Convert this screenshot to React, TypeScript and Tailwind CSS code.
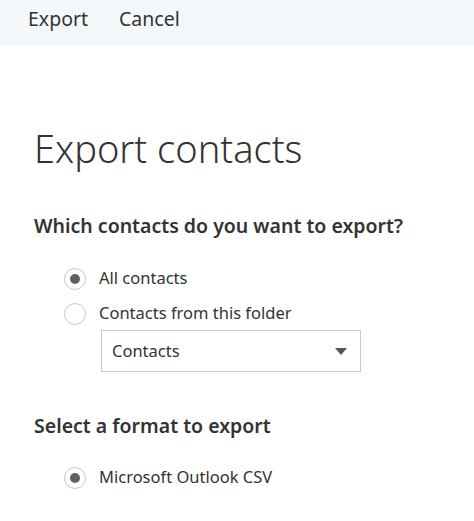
import React from 'react';

const Radio = ({ checked, label }: { checked?: boolean; label: string }) => (
  <label className="flex items-center gap-[13px] h-[35px]">
    <span className="w-[22px] h-[22px] rounded-full border border-[#c8c8c8] bg-white flex items-center justify-center shrink-0">
      {checked && <span className="w-[10px] h-[10px] rounded-full bg-[#5f5f5f]" />}
    </span>
    <span className="text-[16.5px] text-[#333]">{label}</span>
  </label>
);

const App = () => {
  return (
    <div className="w-[474px] h-[521px] bg-white overflow-hidden" style={{ fontFamily: '"Noto Sans", "Open Sans", sans-serif' }}>
      {/* Top command bar */}
      <div className="h-[45px] bg-[#f4f8fb] flex items-start gap-[31px] pl-[28px] pt-[4px] text-[19.5px] text-[#333]">
        <button>Export</button>
        <button>Cancel</button>
      </div>

      <div className="pl-[34px]">
        <h1 className="mt-[79px] text-[38px] font-light text-[#333] leading-[48px]">Export contacts</h1>

        <h2 className="mt-[41px] text-[19.5px] font-semibold text-[#333] leading-[26px]">Which contacts do you want to export?</h2>

        <div className="mt-[22px] pl-[30px]">
          <Radio checked label="All contacts" />
          <Radio label="Contacts from this folder" />
          <div className="ml-[37px] -mt-[1px] w-[260px] h-[42px] border border-[#c8c8c8] flex items-center justify-between pl-[10px] pr-[13px]">
            <span className="text-[16.5px] text-[#333]">Contacts</span>
            <svg width="12" height="7" viewBox="0 0 12 7"><path d="M0 0 L12 0 L6 7 Z" fill="#555" /></svg>
          </div>
        </div>

        <h2 className="mt-[41px] text-[19.5px] font-semibold text-[#333] leading-[26px]">Select a format to export</h2>

        <div className="mt-[21px] pl-[30px]">
          <Radio checked label="Microsoft Outlook CSV" />
        </div>
      </div>
    </div>
  );
};

export default App;
